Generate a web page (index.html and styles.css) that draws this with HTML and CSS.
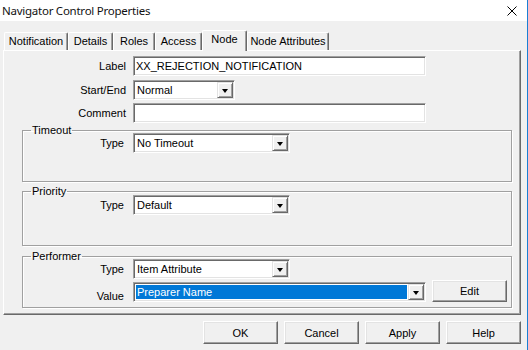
FILE: index.html
```html
<!DOCTYPE html>
<html>
<head>
<meta charset="utf-8">
<title>Navigator Control Properties</title>
<link rel="stylesheet" href="styles.css">
</head>
<body>
<div class="window">
  <div class="titlebar">
    <span class="title">Navigator Control Properties</span>
    <svg class="close" viewBox="0 0 10 10"><path d="M0.5 0.5L9.5 9.5M9.5 0.5L0.5 9.5" stroke="#000" stroke-width="1" fill="none"/></svg>
  </div>
  <div class="tabs">
    <div class="tab t-notif">Notification</div>
    <div class="tab t-details">Details</div>
    <div class="tab t-roles">Roles</div>
    <div class="tab t-access">Access</div>
    <div class="tab t-node active">Node</div>
    <div class="tab t-attrs">Node Attributes</div>
  </div>
  <div class="panel">
    <div class="row r1">
      <span class="lbl">Label</span>
      <div class="edit wide">XX_REJECTION_NOTIFICATION</div>
    </div>
    <div class="row r2">
      <span class="lbl">Start/End</span>
      <div class="combo w-short"><span class="val">Normal</span><span class="drop"><span class="arrow"></span></span></div>
    </div>
    <div class="row r3">
      <span class="lbl">Comment</span>
      <div class="edit wide"></div>
    </div>
    <fieldset class="group g-timeout">
      <legend>Timeout</legend>
      <div class="row grow">
        <span class="lbl glbl">Type</span>
        <div class="combo w-mid"><span class="val">No Timeout</span><span class="drop"><span class="arrow"></span></span></div>
      </div>
    </fieldset>
    <fieldset class="group g-priority">
      <legend>Priority</legend>
      <div class="row grow">
        <span class="lbl glbl">Type</span>
        <div class="combo w-mid"><span class="val">Default</span><span class="drop"><span class="arrow"></span></span></div>
      </div>
    </fieldset>
    <fieldset class="group g-performer">
      <legend>Performer</legend>
      <div class="row grow">
        <span class="lbl glbl">Type</span>
        <div class="combo w-mid"><span class="val">Item Attribute</span><span class="drop"><span class="arrow"></span></span></div>
      </div>
      <div class="row vrow">
        <span class="lbl glbl">Value</span>
        <div class="combo wide"><span class="val sel">Preparer Name</span><span class="drop"><span class="arrow"></span></span></div>
        <div class="btn edit-btn">Edit</div>
      </div>
    </fieldset>
  </div>
  <div class="buttons">
    <div class="btn">OK</div>
    <div class="btn">Cancel</div>
    <div class="btn">Apply</div>
    <div class="btn">Help</div>
  </div>
</div>
</body>
</html>
```
FILE: styles.css
```css
* { box-sizing: border-box; }
body {
  margin: 0;
  background: #f0f0f0;
  font-family: "Liberation Sans", Arial, sans-serif;
  font-size: 11px;
  color: #000;
}
.window {
  width: 528px;
  height: 350px;
  border-right: 1px solid #1a7fd4;
  background: #f0f0f0;
  overflow: hidden;
}
.titlebar {
  height: 21px;
  background: #fff;
  display: flex;
  align-items: center;
  justify-content: space-between;
  padding: 0 10px 0 2px;
}
.title {
  font-family: "Noto Sans", "Open Sans", sans-serif;
  font-size: 11.5px;
  letter-spacing: -0.25px;
  color: #111;
}
.close { width: 10px; height: 10px; display: block; }

.tabs {
  display: flex;
  align-items: flex-end;
  height: 21px;
  margin-top: 9px;
  margin-bottom: -1px;
  padding-left: 4px;
  position: relative;
  z-index: 1;
}
.tab {
  flex: none;
  height: 18px;
  margin-bottom: 1px;
  border-top: 1px solid #fff;
  border-left: 1px solid #fff;
  border-right: 1px solid #696969;
  border-radius: 2px 2px 0 0;
  box-shadow: inset -1px 0 #a0a0a0;
  display: flex;
  align-items: center;
  justify-content: center;
  padding-bottom: 1px;
  white-space: nowrap;
}
.tab.active {
  height: 21px;
  margin-bottom: 0;
  padding-bottom: 4px;
  background: #f0f0f0;
}
.t-notif { width: 64px; }
.t-details { width: 45px; }
.t-roles { width: 42px; }
.t-access { width: 47px; }
.t-node { width: 45px; }
.t-attrs { width: 82px; }

.panel {
  margin-left: 3px;
  width: 518px;
  height: 265px;
  border: 1px solid;
  border-color: #fff #696969 #696969 #fff;
  box-shadow: inset -1px -1px #a0a0a0;
  padding-top: 5px;
}
.row {
  display: flex;
  align-items: center;
}
.r1 { margin-bottom: 4px; }
.r2 { margin-bottom: 3px; }
.lbl {
  width: 122px;
  margin-right: 7px;
  text-align: right;
  white-space: nowrap;
}
.glbl {
  width: 101px;
  margin-right: 9px;
}
.edit, .combo {
  height: 20px;
  background: #fff;
  border: 1px solid;
  border-color: #a0a0a0 #fff #fff #a0a0a0;
  box-shadow: inset 1px 1px #696969, inset -1px -1px #e3e3e3;
}
.edit {
  display: flex;
  align-items: center;
  padding-left: 2px;
  white-space: nowrap;
}
.wide { width: 293px; }
.w-short { width: 102px; }
.w-mid { width: 157px; }
.combo {
  display: flex;
  align-items: stretch;
  padding: 1px;
}
.val {
  flex: 1;
  display: flex;
  align-items: center;
  padding-left: 2px;
  white-space: nowrap;
}
.val.sel {
  background: #0078d7;
  color: #fff;
  margin: 1px;
  padding-left: 1px;
}
.drop {
  width: 16px;
  flex: none;
  background: #f0f0f0;
  border: 1px solid;
  border-color: #e3e3e3 #696969 #696969 #e3e3e3;
  box-shadow: inset 1px 1px #fff, inset -1px -1px #a0a0a0;
  display: flex;
  align-items: center;
  justify-content: center;
}
.arrow {
  width: 0;
  height: 0;
  border-top: 4px solid #000;
  border-left: 3.5px solid transparent;
  border-right: 3.5px solid transparent;
  margin-top: 1px;
}

.group {
  margin: 1px 8px 0 18px;
  padding: 0;
  min-width: 0;
  border: 1px solid #a0a0a0;
  box-shadow: inset 1px 1px #fff, 1px 1px #fff;
  height: 58px;
}
.group legend {
  padding: 0 1px;
  margin-left: 8px;
  line-height: 13px;
}
.g-priority { margin-top: 3px; height: 61px; }
.g-performer { margin-top: 4px; height: 58px; }
.grow { margin-top: -4px; }
.g-priority .grow { margin-top: -3px; }
.g-performer .grow { margin-bottom: 1px; }
.vrow { align-items: flex-end; }

.btn {
  width: 75px;
  height: 23px;
  background: #f0f0f0;
  border: 1px solid;
  border-color: #fff #696969 #696969 #fff;
  box-shadow: inset -1px -1px #a0a0a0, inset 1px 1px #e3e3e3;
  display: flex;
  align-items: center;
  justify-content: center;
}
.edit-btn {
  height: 22px;
  margin-left: 6px;
}
.buttons {
  display: flex;
  justify-content: flex-end;
  gap: 6px;
  margin-top: 6px;
  padding-right: 6px;
}
```
